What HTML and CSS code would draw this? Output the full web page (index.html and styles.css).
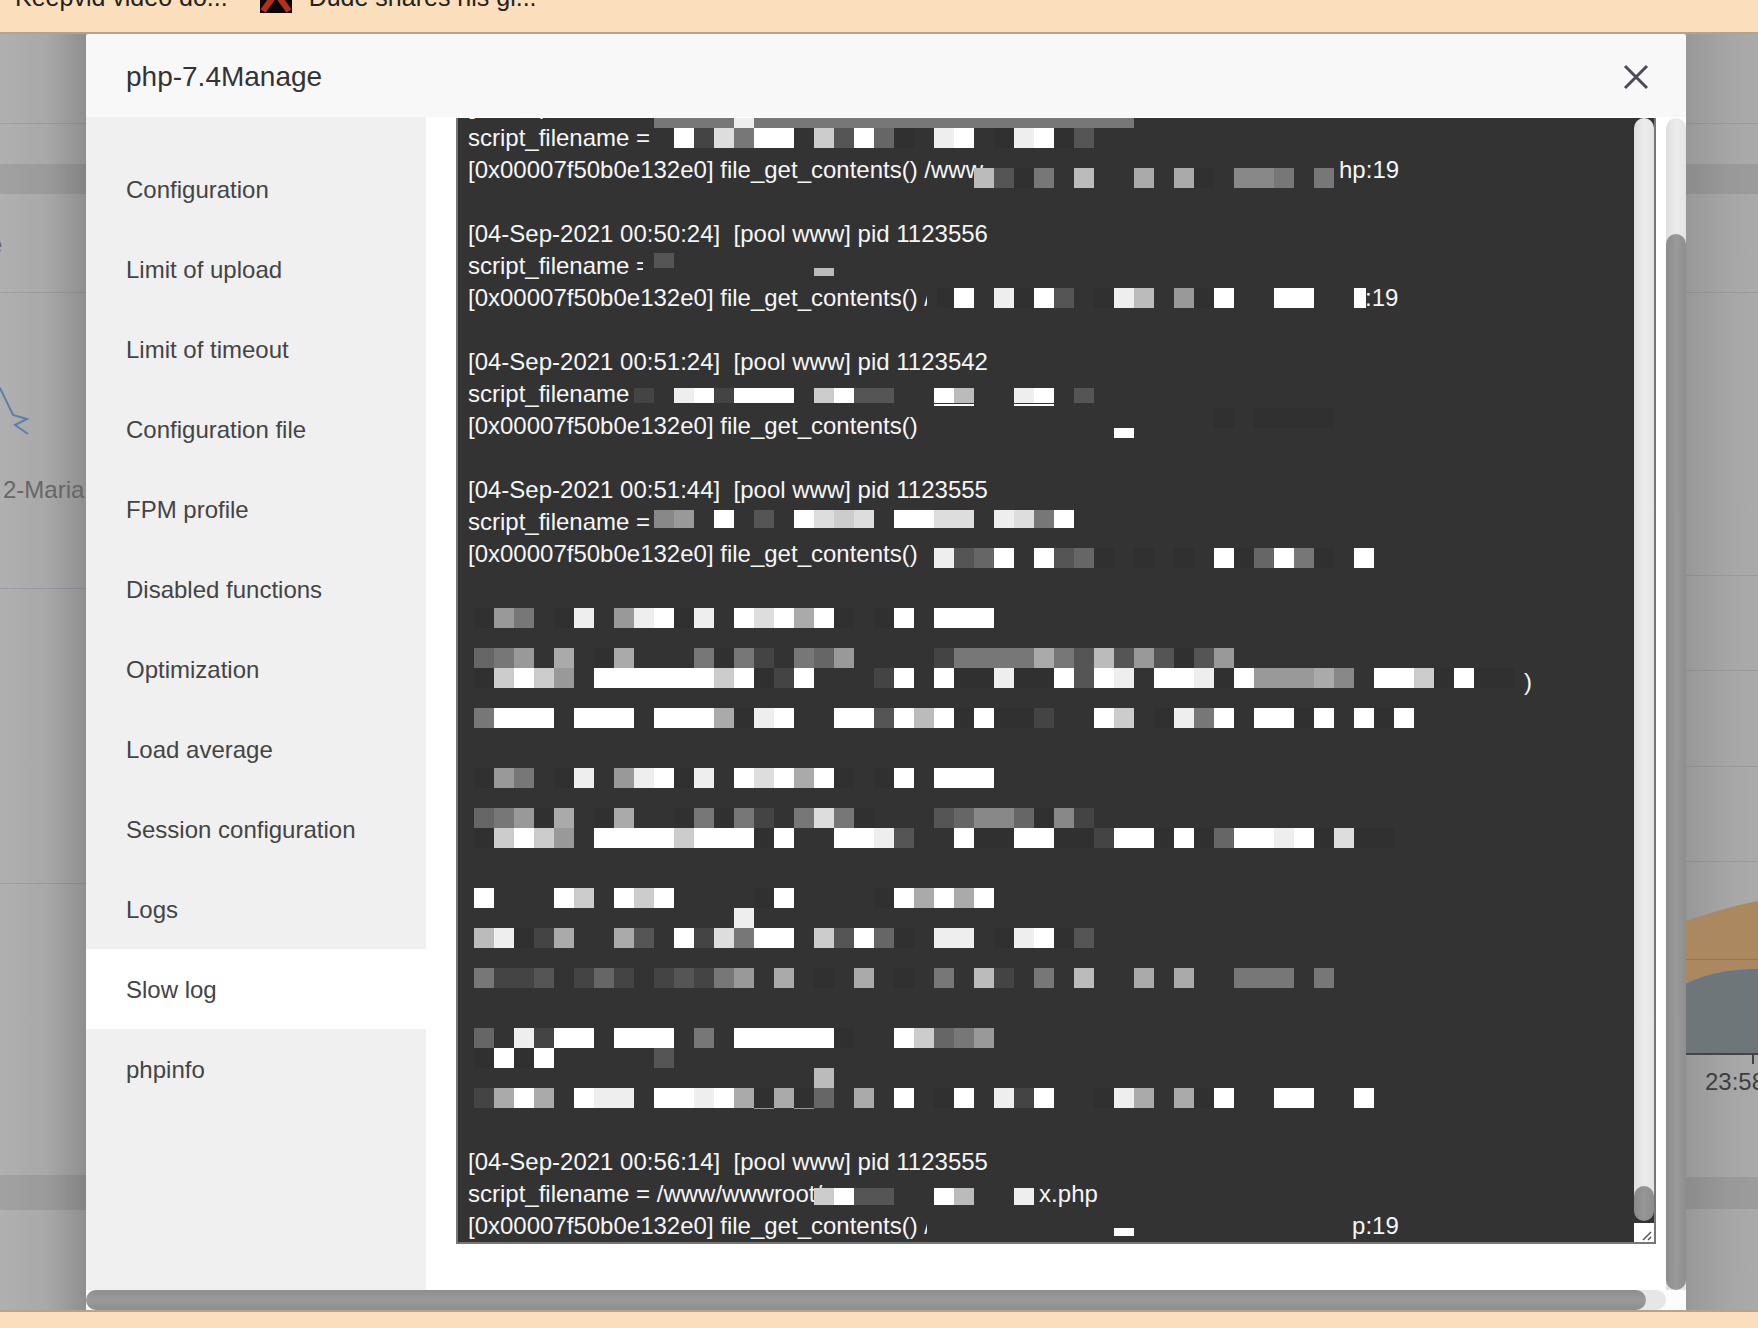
FILE: index.html
```html
<!DOCTYPE html>
<html lang="en">
<head>
<meta charset="utf-8">
<title>php-7.4 Manage</title>
<link rel="stylesheet" href="styles.css">
</head>
<body>
<header class="tabs-bar">
  <div class="tabs">
    <span class="tab-label">Keepvid video do...</span>
    <svg class="tab-icon" viewBox="0 0 32 32"><rect width="32" height="32" fill="#0b0606"/><path d="M8 2 L16 14 L24 2 M3 30 L16 12 L29 30" fill="none" stroke="#b5301c" stroke-width="6"/></svg>
    <span class="tab-label">Dude shares his gi...</span>
  </div>
</header>
<main class="stage">
  <div class="pane pane-left">
    <svg class="pane-art" viewBox="0 34 86 1276" width="86" height="1276">
      <rect class="band" x="0" y="164" width="86" height="30"/>
      <rect class="band" x="0" y="1175" width="86" height="35"/>
      <rect class="rule" x="0" y="123" width="86" height="1"/>
      <rect class="rule" x="0" y="292" width="86" height="1"/>
      <rect class="rule-blue" x="0" y="588" width="86" height="1"/>
      <rect class="rule-blue" x="0" y="883" width="86" height="1"/>
      <polyline class="spark" points="0,388 13,415 27,419 15,425 28,434"/>
      <text class="pane-text" x="3" y="498">2-Maria</text>
      <text class="pane-text" x="-11" y="253">e</text>
    </svg>
  </div>
  <section class="modal">
    <div class="modal-head">
      <h1 class="modal-title">php-7.4Manage</h1>
      <svg class="close" viewBox="0 0 26 26"><path d="M2 2 L24 24 M24 2 L2 24"/></svg>
    </div>
    <div class="modal-body">
      <nav class="side">
        <ul class="side-list">
          <li class="side-item">Install extensions</li>
          <li class="side-item">Configuration</li>
          <li class="side-item">Limit of upload</li>
          <li class="side-item">Limit of timeout</li>
          <li class="side-item">Configuration file</li>
          <li class="side-item">FPM profile</li>
          <li class="side-item">Disabled functions</li>
          <li class="side-item">Optimization</li>
          <li class="side-item">Load average</li>
          <li class="side-item">Session configuration</li>
          <li class="side-item">Logs</li>
          <li class="side-item is-active">Slow log</li>
          <li class="side-item">phpinfo</li>
        </ul>
      </nav>
      <div class="content">
        <div class="logbox">
          <div class="log" id="log">
            <div class="log-text">
              <div class="entry">
                <div class="line">[04-Sep-2021 00:50:04]  [pool www] pid 1123555</div>
                <div class="line">script_filename =</div>
                <div class="line tail"><span>[0x00007f50b0e132e0] file_get_contents() /www</span><span class="gap-a">hp:19</span></div>
              </div>
              <div class="entry">
                <div class="line">[04-Sep-2021 00:50:24]  [pool www] pid 1123556</div>
                <div class="line">script_filename =</div>
                <div class="line tail"><span>[0x00007f50b0e132e0] file_get_contents() /</span><span class="gap-b">:19</span></div>
              </div>
              <div class="entry">
                <div class="line">[04-Sep-2021 00:51:24]  [pool www] pid 1123542</div>
                <div class="line">script_filename</div>
                <div class="line">[0x00007f50b0e132e0] file_get_contents()</div>
              </div>
              <div class="entry">
                <div class="line">[04-Sep-2021 00:51:44]  [pool www] pid 1123555</div>
                <div class="line">script_filename =</div>
                <div class="line">[0x00007f50b0e132e0] file_get_contents()</div>
              </div>
              <div class="entry entry-hidden">
                <div class="line tail"><span class="gap-c">)</span></div>
              </div>
              <div class="entry">
                <div class="line">[04-Sep-2021 00:56:14]  [pool www] pid 1123555</div>
                <div class="line tail"><span>script_filename = /www/wwwroot/</span><span class="gap-d">x.php</span></div>
                <div class="line tail"><span>[0x00007f50b0e132e0] file_get_contents() /</span><span class="gap-e">p:19</span></div>
              </div>
            </div>
          </div>
          <div class="log-scroll">
            <div class="log-track"></div>
            <div class="log-thumb"></div>
            <div class="log-corner">
              <svg viewBox="0 0 19 19" width="19" height="19"><path d="M9 17 L17 9 M14 17 L17 14"/></svg>
            </div>
          </div>
        </div>
      </div>
      <div class="vscroll"><div class="vthumb"></div></div>
    </div>
    <div class="hscroll-row">
      <div class="hscroll"><div class="hthumb"></div></div>
    </div>
  </section>
  <div class="pane pane-right">
    <svg class="pane-art" viewBox="1686 34 72 1276" width="72" height="1276">
      <rect class="band" x="1686" y="164" width="72" height="30"/>
      <rect class="band" x="1686" y="1177" width="72" height="32"/>
      <rect class="rule" x="1686" y="123" width="72" height="1"/>
      <rect class="rule" x="1686" y="292" width="72" height="1"/>
      <rect class="rule" x="1686" y="575" width="72" height="1"/>
      <rect class="rule" x="1686" y="670" width="72" height="1"/>
      <rect class="rule" x="1686" y="766" width="72" height="1"/>
      <rect class="rule" x="1686" y="861" width="72" height="1"/>
      <path class="area-orange" d="M1686 921 C1710 913 1735 905 1758 901 V985 H1686 Z"/>
      <rect class="area-line" x="1686" y="959" width="72" height="1"/>
      <path class="area-blue" d="M1686 985 C1705 975 1730 970 1758 970 V1054 H1686 Z"/>
      <path class="area-edge" d="M1686 985 C1705 975 1730 970 1758 970"/>
      <rect class="axis" x="1686" y="1053" width="72" height="2"/>
      <rect class="axis" x="1752" y="1054" width="2" height="10"/>
      <text class="pane-text pane-dark" x="1705" y="1090">23:58</text>
    </svg>
  </div>
</main>
<footer class="foot-bar"></footer>
<script src="mosaic.js"></script>
</body>
</html>
```

FILE: styles.css
```css
* { box-sizing: border-box; }
html, body { margin: 0; padding: 0; }
body {
  width: 1758px;
  height: 1328px;
  overflow: hidden;
  display: flex;
  flex-direction: column;
  font-family: "Liberation Sans", Arial, sans-serif;
  background: #a8a8a8;
}

.tabs-bar {
  flex: 0 0 34px;
  background: #fbdfbc;
  border-bottom: 2px solid #b5a288;
  overflow: hidden;
}
.tabs {
  display: flex;
  align-items: center;
  height: 32px;
  margin-top: -19px;
  padding-left: 15px;
  font-size: 25px;
  color: #222;
}
.tab-label { white-space: nowrap; }
.tab-icon { width: 32px; height: 32px; margin: 0 17px 0 32px; flex: none; }

.stage {
  flex: 0 0 1276px;
  display: grid;
  grid-template-columns: 86px 1600px 72px;
}
.pane { overflow: hidden; }
.pane-art { display: block; }
.pane-left { background: linear-gradient(90deg, #b0b0b0 0, #a8a8a8 55%, #8f8f8f 100%); }
.pane-right { background: linear-gradient(90deg, #989898 0, #a6a6a6 60%, #aaaaaa 100%); }
.band { fill: rgba(0, 0, 0, .08); }
.rule { fill: rgba(0, 0, 0, .08); }
.rule-blue { fill: rgba(70, 70, 120, .18); }
.spark { fill: none; stroke: #5d7fa6; stroke-width: 2; }
.pane-text { font-family: "Liberation Sans", Arial, sans-serif; font-size: 24px; fill: #666; }
.pane-dark { fill: #3e3e3e; }
.area-orange { fill: #ac8860; }
.area-line { fill: rgba(120, 80, 40, .35); }
.area-blue { fill: #6f7679; }
.area-edge { fill: none; stroke: #5f7897; stroke-width: 2; }
.axis { fill: #444; }

.modal {
  display: flex;
  flex-direction: column;
  background: #fff;
  border-radius: 3px 3px 0 0;
  overflow: hidden;
  height: 1276px;
}
.modal-head {
  flex: 0 0 83px;
  display: flex;
  align-items: center;
  justify-content: space-between;
  padding: 3px 37px 0 40px;
  background: #f8f8f8;
  position: relative;
  z-index: 1;
}
.modal-title { margin: 0; font-size: 28px; font-weight: 400; color: #333; }
.close { width: 26px; height: 26px; }
.close path { fill: none; stroke: #4a4a58; stroke-width: 3; }

.modal-body { flex: 0 0 1173px; display: flex; min-height: 0; }
.side { flex: 0 0 340px; background: #f0f0f1; overflow: hidden; }
.side-list { list-style: none; margin: -48px 0 0; padding: 0; }
.side-item {
  height: 80px;
  display: flex;
  align-items: center;
  padding: 1px 0 0 40px;
  font-size: 24px;
  color: #444;
}
.side-item:first-child { padding: 0 0 1px 40px; }
.side-item.is-active { background: #fff; }

.content { flex: 0 0 1240px; padding: 1px 10px 46px 30px; }
.logbox {
  height: 100%;
  display: flex;
  border: 2px solid #777;
  border-top: 0;
  background: #333;
}
.log { flex: 1; position: relative; overflow: hidden; }
.log-text {
  margin-top: -28px;
  padding-left: 10px;
  font: 24px/32px "Liberation Sans", Arial, sans-serif;
  color: #f6f6f6;
}
.entry { padding-bottom: 32px; }
.entry-hidden { padding-top: 64px; padding-bottom: 448px; }
.line { height: 32px; white-space: pre; }
.tail { display: flex; }
.gap-a { margin-left: 356px; }
.gap-b { margin-left: 434px; }
.gap-c { margin-left: 1056px; }
.gap-d { margin-left: 217px; }
.gap-e { margin-left: 421px; }

.mosaic-row { position: absolute; display: flex; }
.mosaic-cell { flex: none; height: 100%; }

.log-scroll { flex: 0 0 20px; display: flex; flex-direction: column; }
.log-track {
  flex: 1;
  margin-bottom: -17px;
  border-radius: 10px 10px 0 0;
  background: linear-gradient(90deg, #dedede, #ececec 50%, #e4e4e4);
}
.log-thumb {
  flex: 0 0 35px;
  position: relative;
  border-radius: 10px;
  background: linear-gradient(90deg, #8a8a8a, #969696 50%, #8c8c8c);
  margin-bottom: 2px;
}
.log-corner { flex: 0 0 19px; background: #fff; }
.log-corner svg { display: block; }
.log-corner path { fill: none; stroke: #555; stroke-width: 1.5; }

.vscroll {
  flex: 0 0 20px;
  margin-top: 1px;
  display: flex;
  flex-direction: column;
  justify-content: flex-end;
  border-radius: 10px 10px 0 0;
  background: linear-gradient(90deg, #dedede, #ececec 50%, #e4e4e4);
}
.vthumb {
  height: 1056px;
  border-radius: 10px;
  background: linear-gradient(90deg, #8c8c8c, #9a9a9a 50%, #8e8e8e);
}
.hscroll-row { flex: 0 0 20px; padding-right: 20px; background: #fcfcfc; }
.hscroll { height: 20px; border-radius: 10px; background: #e6e6e6; }
.hthumb {
  width: 1560px;
  height: 20px;
  border-radius: 10px;
  background: linear-gradient(180deg, #8e8e8e, #9a9a9a 50%, #8e8e8e);
}

.foot-bar {
  flex: 0 0 18px;
  background: #fbdfbc;
  border-top: 2px solid #b5a288;
}
```

FILE: mosaic.js
```js
// Pixelated (redacted) parts of the log.
// [y on page, height, cells from column 0, cell width, extra left offset]
// Each char: "." is no cell, "x" a near-background dark, a hex digit a grey level.
var ROWS = [
  [118, 10, ".........7777e7777777777777777777"],
  [128, 20, "..........f4d7ff.c5f6x.ef.xefx53"],
  [168, 20, ".........................b5x7.b..a.ax.887.7"],
  [253, 15, ".........5"],
  [255, 15, "........3", 11, 9],
  [268, 8, ".................b"],
  [288, 20, ".......................xf.exf5.xeb.9xf..ff"],
  [288, 20, "......................3", 10, 13],
  [288, 20, "............................................f", 12],
  [388, 15, "........4.ef4fff.cf55..fb..ef.5"],
  [404, 2, ".......................ff..ff"],
  [408, 20, ".....................................x.xxxx"],
  [428, 10, "................................f"],
  [510, 18, ".........89.f.5.fdcd.ffdd.ed7f"],
  [548, 20, ".......................e56f.f56x.x.x.fx6f7x.f"],
  [608, 20, "x97.xe.9efxe.fdfafx.xf.fff"],
  [648, 20, "679.a.xa...7x74.769....47777a75b595x59"],
  [668, 20, "xcfc9.ffffffcfx4f...4f.fxxexxf5fe.ffexf999a8.ffcxfxx"],
  [708, 20, "7fff.fff.fffaxef..ff5fbfxfxx4..fc.xe7f.ffxf.fxf"],
  [768, 20, "x97.xe.9efxe.fdfafx.xf.fff"],
  [808, 20, "679xa.xa..x7x74.7d7x...56886x84"],
  [828, 20, "xcfc9.ffffcfffxf..ffe5..fxxffxx4ffxfx6ffefxdxx"],
  [888, 20, "f...fc.fcf....xf....xfafaf"],
  [908, 20, ".............e"],
  [928, 20, "bex4a..a5.f4d7ff.c5f6x.ee.xefx53"],
  [968, 20, "7445.464.45479.a.x.a.x.7.b4.7.b..a.a..777.7"],
  [1028, 20, "6.e4ff.fff.7.fffffx..fc679"],
  [1048, 20, "xfxf.....5"],
  [1068, 20, ".................b"],
  [1088, 20, "4afa.fee.ffefaxax6.a.f.xf.e4f..xea.axf..ff..f"],
  [1108, 1, "..............9.9"],
  [1188, 17, ".................cf55..fb..e"],
  [1214, 26, "......................3", 10, 13],
  [1228, 8, "................................f"]
];

var COLUMN_ZERO = 16;
var log = document.getElementById("log");
ROWS.forEach(function (row) {
  var el = document.createElement("div");
  el.className = "mosaic-row";
  el.style.top = (row[0] - 118) + "px";
  el.style.left = (COLUMN_ZERO + (row[4] || 0)) + "px";
  el.style.height = row[1] + "px";
  row[2].split("").forEach(function (ch) {
    var cell = document.createElement("div");
    cell.className = "mosaic-cell";
    cell.style.width = (ch !== "." && row[3] ? row[3] : 20) + "px";
    if (ch === "x") {
      cell.style.background = "#303030";
    } else if (ch !== ".") {
      cell.style.background = "#" + ch + ch + ch;
    }
    el.appendChild(cell);
  });
  log.appendChild(el);
});
```
